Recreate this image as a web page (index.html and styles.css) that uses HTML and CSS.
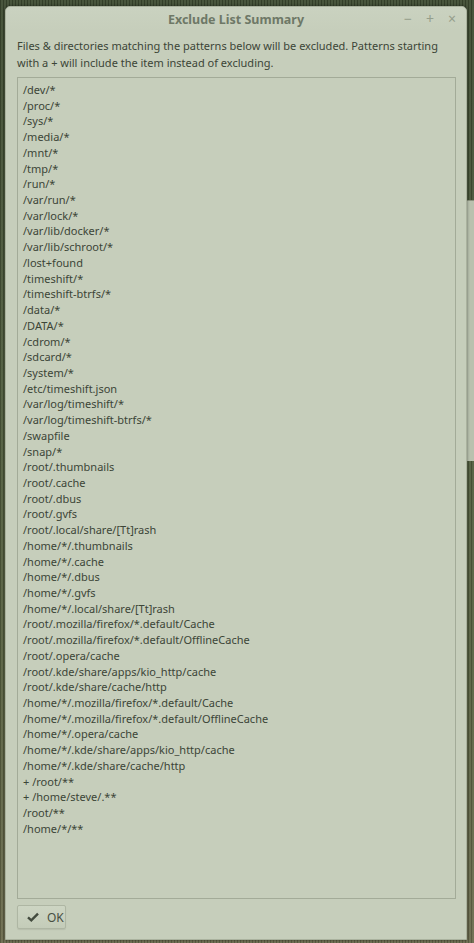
FILE: index.html
```html
<!DOCTYPE html>
<html lang="en">
<head>
    <meta charset="UTF-8">
    <title>Exclude List Summary</title>
    <link rel="stylesheet" href="styles.css">
</head>
<body>
    <div class="desktop">
        <div class="back-window"></div>
        <div class="dialog">
            <div class="titlebar">
                <div class="title">Exclude List Summary</div>
                <div class="win-buttons">
                    <span class="win-btn">&minus;</span>
                    <span class="win-btn">+</span>
                    <span class="win-btn">&times;</span>
                </div>
            </div>
            <div class="dialog-body">
                <p class="description">Files &amp; directories matching the patterns below will be excluded. Patterns starting with a + will include the item instead of excluding.</p>
                <div class="pattern-list">
                    <div>/dev/*</div>
                    <div>/proc/*</div>
                    <div>/sys/*</div>
                    <div>/media/*</div>
                    <div>/mnt/*</div>
                    <div>/tmp/*</div>
                    <div>/run/*</div>
                    <div>/var/run/*</div>
                    <div>/var/lock/*</div>
                    <div>/var/lib/docker/*</div>
                    <div>/var/lib/schroot/*</div>
                    <div>/lost+found</div>
                    <div>/timeshift/*</div>
                    <div>/timeshift-btrfs/*</div>
                    <div>/data/*</div>
                    <div>/DATA/*</div>
                    <div>/cdrom/*</div>
                    <div>/sdcard/*</div>
                    <div>/system/*</div>
                    <div>/etc/timeshift.json</div>
                    <div>/var/log/timeshift/*</div>
                    <div>/var/log/timeshift-btrfs/*</div>
                    <div>/swapfile</div>
                    <div>/snap/*</div>
                    <div>/root/.thumbnails</div>
                    <div>/root/.cache</div>
                    <div>/root/.dbus</div>
                    <div>/root/.gvfs</div>
                    <div>/root/.local/share/[Tt]rash</div>
                    <div>/home/*/.thumbnails</div>
                    <div>/home/*/.cache</div>
                    <div>/home/*/.dbus</div>
                    <div>/home/*/.gvfs</div>
                    <div>/home/*/.local/share/[Tt]rash</div>
                    <div>/root/.mozilla/firefox/*.default/Cache</div>
                    <div>/root/.mozilla/firefox/*.default/OfflineCache</div>
                    <div>/root/.opera/cache</div>
                    <div>/root/.kde/share/apps/kio_http/cache</div>
                    <div>/root/.kde/share/cache/http</div>
                    <div>/home/*/.mozilla/firefox/*.default/Cache</div>
                    <div>/home/*/.mozilla/firefox/*.default/OfflineCache</div>
                    <div>/home/*/.opera/cache</div>
                    <div>/home/*/.kde/share/apps/kio_http/cache</div>
                    <div>/home/*/.kde/share/cache/http</div>
                    <div>+ /root/**</div>
                    <div>+ /home/steve/.**</div>
                    <div>/root/**</div>
                    <div>/home/*/**</div>
                </div>
                <div class="actions">
                    <button class="ok-btn">
                        <svg class="check" width="12" height="10" viewBox="0 0 12 10">
                            <path d="M1 5.3 L4.3 8.3 L11 1.6" fill="none" stroke="#434b3e" stroke-width="2.4"/>
                        </svg>
                        <span>OK</span>
                    </button>
                </div>
            </div>
        </div>
    </div>
</body>
</html>
```

FILE: styles.css
```css
html, body {
    margin: 0;
    padding: 0;
}
body {
    width: 474px;
    height: 943px;
    overflow: hidden;
    font-family: "Noto Sans", "Open Sans", sans-serif;
}
.desktop {
    position: relative;
    height: 943px;
    padding: 6px 7px 3px 5px;
    box-sizing: border-box;
    overflow: hidden;
    background:
        repeating-linear-gradient(90deg, rgba(0,0,0,0.15) 0 1px, rgba(255,255,255,0.06) 1px 3px),
        linear-gradient(180deg, #3d4a30 0%, #4d5a3c 40%, #56603f 70%, #6a6a4c 100%);
}
.back-window {
    position: absolute;
    left: 440px;
    top: 200px;
    width: 34px;
    height: 260px;
    background: #b9c1ae;
    border-top: 1px solid #8b937f;
}
.dialog {
    position: relative;
    height: 100%;
    background: #c6cebb;
    border: 1px solid #aab29e;
    border-radius: 5px 5px 0 0;
    box-sizing: border-box;
    display: flex;
    flex-direction: column;
    box-shadow: 0 0 3px rgba(0,0,0,0.5);
}
.titlebar {
    height: 24px;
    display: flex;
    align-items: center;
    justify-content: center;
    position: relative;
    background: linear-gradient(180deg, #cad2c0, #c6cebb);
    border-radius: 5px 5px 0 0;
}
.title {
    font-weight: bold;
    font-size: 12.5px;
    color: #6e7867;
}
.win-buttons {
    position: absolute;
    right: 9px;
    top: 2px;
    display: flex;
    gap: 12px;
}
.win-btn {
    color: #959e8b;
    font-size: 14px;
    width: 10px;
    text-align: center;
}
.dialog-body {
    flex: 1;
    display: flex;
    flex-direction: column;
    padding: 7px 10px 10px 11px;
}
.description {
    margin: 0 0 6px 0;
    font-size: 11px;
    line-height: 16.5px;
    color: #3c4537;
}
.pattern-list {
    flex: 1;
    border: 1px solid #a3ab98;
    padding: 4px 5px;
    font-size: 11px;
    line-height: 15.72px;
    color: #3c4537;
}
.actions {
    padding-top: 6px;
    display: flex;
}
.ok-btn {
    display: flex;
    align-items: center;
    gap: 8px;
    height: 24px;
    width: 49px;
    padding: 0 0 0 9px;
    border: 1px solid #aeb6a3;
    border-radius: 2px;
    background: linear-gradient(180deg, #cdd5c3, #c4ccb9);
    font-family: inherit;
    font-size: 12px;
    color: #474f42;
    box-shadow: 0 1px 1px rgba(0,0,0,0.08);
}
```
